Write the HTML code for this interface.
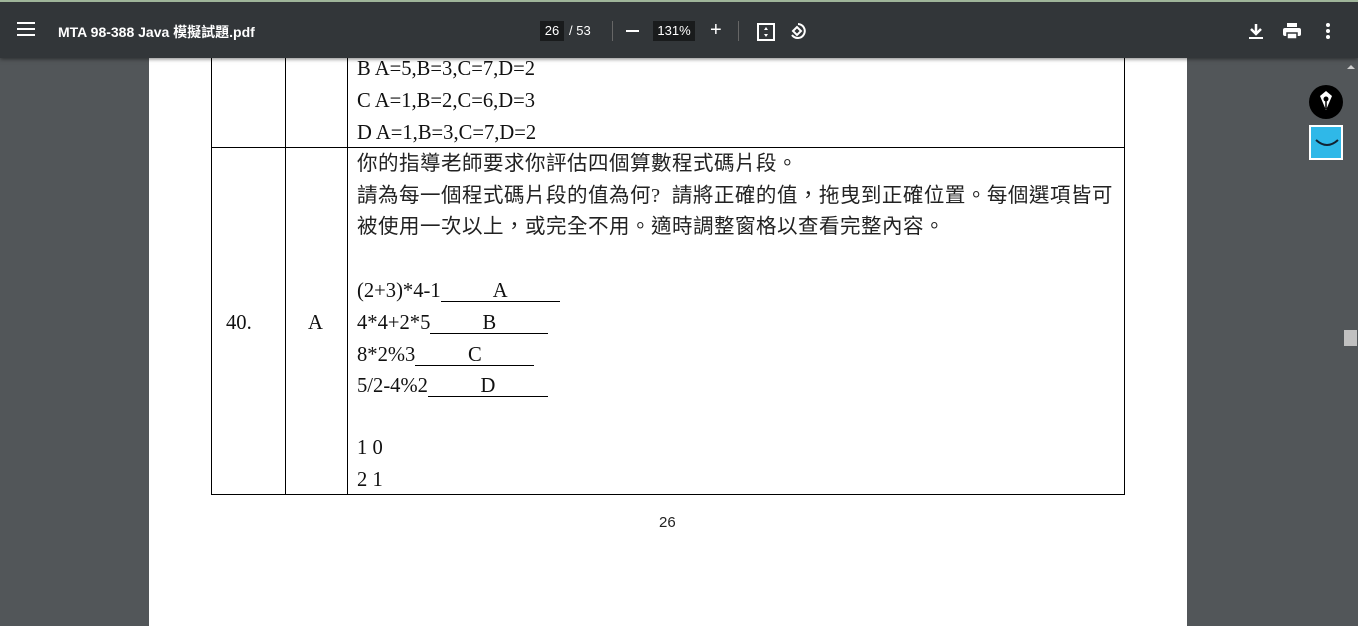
<!DOCTYPE html>
<html><head><meta charset="utf-8"><style>
*{margin:0;padding:0;box-sizing:border-box}
html,body{width:1358px;height:626px;overflow:hidden}
body{background:#525659;position:relative;font-family:"Liberation Serif","Noto Serif CJK SC",serif}
#bar{position:absolute;left:0;top:0;width:1358px;height:58px;background:#323639;border-top:2px solid #9fb59a;box-shadow:0 1px 4px rgba(0,0,0,.5);z-index:5;color:#fff;font-family:"Liberation Sans","Noto Sans CJK TC",sans-serif}
.t{position:absolute;white-space:nowrap}
#page{position:absolute;left:149px;top:58px;width:1038px;height:568px;background:#fff}
.ln{position:absolute;background:#000}
.tx{position:absolute;font-size:20.6px;color:#111;white-space:nowrap;line-height:24px}
.cj{font-family:"Liberation Serif","Noto Sans CJK TC",sans-serif;font-size:20.5px;color:#222;letter-spacing:0.5px}
u{text-decoration:none;border-bottom:1.5px solid #000;display:inline-block;line-height:20px}
</style></head><body>
<div id="bar">
 <svg class="t" style="left:17px;top:20px" width="18" height="14"><rect y="0" width="18" height="2" fill="#fff"/><rect y="6" width="18" height="2" fill="#fff"/><rect y="12" width="18" height="2" fill="#fff"/></svg>
 <div class="t" style="left:58px;top:20px;font-size:14px;font-weight:bold">MTA 98-388 Java 模擬試題.pdf</div>
 <div class="t" style="left:540px;top:19px;width:24px;height:20px;background:#191b1c;font-size:13px;text-align:center;line-height:20px">26</div>
 <div class="t" style="left:569px;top:21px;font-size:13px">/ 53</div>
 <div class="t" style="left:612px;top:19px;width:1px;height:20px;background:#666"></div>
 <div class="t" style="left:626px;top:28px;width:13px;height:2px;background:#fff"></div>
 <div class="t" style="left:653px;top:19px;width:42px;height:20px;background:#191b1c;font-size:13px;text-align:center;line-height:20px">131%</div>
 <div class="t" style="left:710px;top:17px;font-size:20px">+</div>
 <div class="t" style="left:738px;top:19px;width:1px;height:20px;background:#666"></div>
 <svg class="t" style="left:757px;top:21px" width="18" height="18"><rect x="1" y="1" width="16" height="16" fill="none" stroke="#fff" stroke-width="2"/><path d="M9 4l-2 3h4zM9 14l-2-3h4z" fill="#fff"/></svg>
 <svg class="t" style="left:787px;top:19px" width="20" height="20"><path d="M6 10l4-4 4 4-4 4z" fill="none" stroke="#fff" stroke-width="2"/><path d="M11 3a7 7 0 1 1-6 11" fill="none" stroke="#fff" stroke-width="2"/></svg>
 <svg class="t" style="left:1248px;top:21px" width="16" height="17"><path d="M8 1v9M3 6l5 5 5-5" fill="none" stroke="#fff" stroke-width="2.5"/><rect x="1" y="14" width="14" height="2" fill="#fff"/></svg>
 <svg class="t" style="left:1283px;top:21px" width="18" height="16"><rect x="4" y="0" width="10" height="4" fill="#fff"/><rect x="0" y="5" width="18" height="8" rx="2" fill="#fff"/><rect x="4" y="10" width="10" height="6" fill="#fff" stroke="#323639" stroke-width="1.5"/></svg>
 <svg class="t" style="left:1325px;top:21px" width="6" height="16"><circle cx="3" cy="2" r="2" fill="#fff"/><circle cx="3" cy="8" r="2" fill="#fff"/><circle cx="3" cy="14" r="2" fill="#fff"/></svg>
</div>
<div id="page"></div>
<div class="ln" style="left:211px;top:58px;width:1px;height:437px"></div>
<div class="ln" style="left:285px;top:58px;width:1px;height:437px"></div>
<div class="ln" style="left:347px;top:58px;width:1px;height:437px"></div>
<div class="ln" style="left:1124px;top:58px;width:1px;height:437px"></div>
<div class="ln" style="left:211px;top:147px;width:914px;height:1px"></div>
<div class="ln" style="left:211px;top:494px;width:914px;height:1px"></div>
<div class="tx" style="left:357px;top:57px">B A=5,B=3,C=7,D=2</div>
<div class="tx" style="left:357px;top:89px">C A=1,B=2,C=6,D=3</div>
<div class="tx" style="left:357px;top:121px">D A=1,B=3,C=7,D=2</div>
<div class="tx cj" style="left:357px;top:152px">你的指導老師要求你評估四個算數程式碼片段。</div>
<div class="tx cj" style="left:357px;top:184px">請為每一個程式碼片段的值為何?&nbsp;&nbsp;請將正確的值，拖曳到正確位置。每個選項皆可</div>
<div class="tx cj" style="left:357px;top:215px">被使用一次以上，或完全不用。適時調整窗格以查看完整內容。</div>
<div class="tx" style="left:226px;top:311px">40.</div>
<div class="tx" style="left:308px;top:311px">A</div>
<div class="tx" style="left:357px;top:279px">(2+3)*4-1<u style="width:119px;text-align:center">A</u></div>
<div class="tx" style="left:357px;top:311px">4*4+2*5<u style="width:118px;text-align:center">B</u></div>
<div class="tx" style="left:357px;top:343px">8*2%3<u style="width:119px;text-align:center">C</u></div>
<div class="tx" style="left:357px;top:374px">5/2-4%2<u style="width:120px;text-align:center">D</u></div>
<div class="tx" style="left:357px;top:436px">1 0</div>
<div class="tx" style="left:357px;top:468px">2 1</div>
<div class="t" style="left:659px;top:514px;font-family:'Liberation Sans',sans-serif;font-size:15px;color:#222">26</div>
<svg class="t" style="left:1309px;top:85px" width="34" height="34"><circle cx="17" cy="17" r="17" fill="#000"/><path d="M11 11l6-5 6 5-6 14z" fill="#fff"/><circle cx="17" cy="14" r="2.5" fill="#000"/><path d="M17 16v8" stroke="#000" stroke-width="1.5"/></svg>
<div class="t" style="left:1309px;top:125px;width:34px;height:35px;background:#2fb8e8;border:2px solid #fff"></div>
<svg class="t" style="left:1314px;top:136px" width="26" height="14"><path d="M2 4q11 10 22 0" fill="none" stroke="#123" stroke-width="2"/></svg>
<div class="t" style="left:1344px;top:330px;width:13px;height:16px;background:#c1c1c1"></div>
<svg class="t" style="left:1347px;top:64px" width="8" height="6"><path d="M0 5l4-4 4 4z" fill="#ccc"/></svg>
</body></html>
